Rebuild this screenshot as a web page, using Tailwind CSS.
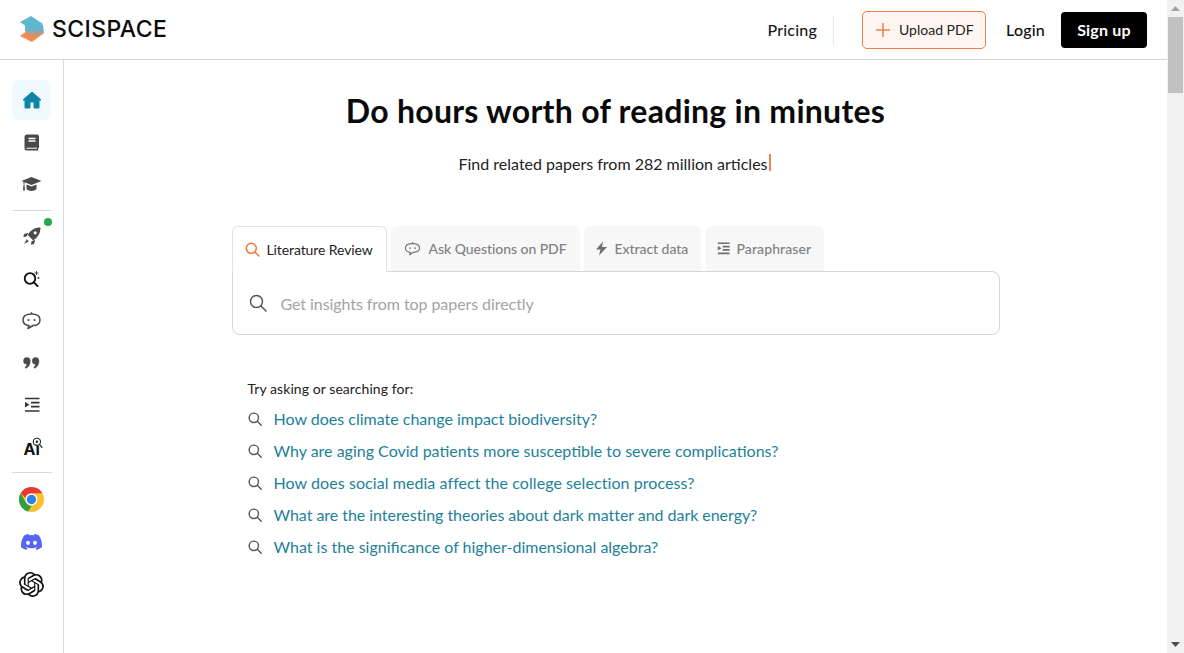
<!DOCTYPE html>
<html><head><meta charset="utf-8">
<script src="https://cdn.jsdelivr.net/npm/@tailwindcss/browser@4"></script>
</head>
<body class="font-['Lato','Liberation_Sans',sans-serif] bg-white overflow-hidden">
<div class="flex w-[1184px] h-[653px]">
  <div class="w-[1167px] flex flex-col">
    <header class="h-[60px] shrink-0 border-b border-[#d6d6d6] flex items-center pl-[19px] pr-[20px]">
      <svg width="26" height="26" viewBox="0 0 26 26" class="-mt-[1px]">
        <defs><linearGradient id="lg" x1="0" y1="0" x2="0" y2="1"><stop offset="0.3" stop-color="#62b5cb"/><stop offset="0.85" stop-color="#f48a4e"/></linearGradient></defs>
        <path d="M1 20 L8 15 L25 17 L13 26 Z" fill="#f48a4e"/>
        <path d="M6 9 L24 9 L25 17 L13 23 L6 15 Z" fill="url(#lg)"/>
        <path d="M1 6 L12 0 L24 8 L14 15 Z" fill="#5fb6cf"/>
      </svg>
      <span class="ml-[7px] text-[23px] leading-none font-medium tracking-[0.4px] text-[#0b0b0b] font-['Inter',sans-serif]">SCISPACE</span>
      <div class="ml-auto flex items-center">
        <span class="text-[16px] font-medium text-[#1a1a1a] tracking-[0.2px]">Pricing</span>
        <div class="w-px h-[28px] bg-[#e8e8e8] mx-[16px]"></div>
        <button class="ml-[12px] w-[124px] h-[38px] border border-[#ef7f4a] rounded-[5px] bg-[#fff6f2] flex items-center pl-[12px]">
          <svg width="16" height="16" viewBox="0 0 16 16"><path d="M8 1v14M1 8h14" stroke="#f0844f" stroke-width="1.6" fill="none"/></svg>
          <span class="ml-[8px] text-[14px] text-[#222]">Upload PDF</span>
        </button>
        <span class="ml-[20px] text-[16px] font-medium text-[#111] tracking-[0.2px]">Login</span>
        <button class="ml-[16px] w-[86px] h-[36px] bg-black rounded-[4px] text-white text-[16px] font-bold tracking-[0.2px]">Sign up</button>
      </div>
    </header>
    <div class="flex flex-1 min-h-0">
      <aside class="w-[64px] shrink-0 border-r border-[#d9d9d9] flex flex-col items-center pt-[20px]">
        <div class="w-[39px] h-[40px] rounded-[6px] bg-[#f0f9fd] flex items-center justify-center">
          <svg width="20" height="18" viewBox="0 0 20 18"><path d="M10 1 L19 9 L17 9 L17 17 L12 17 L12 11 L8 11 L8 17 L3 17 L3 9 L1 9 Z" fill="#0b87a5" stroke="#0b87a5" stroke-linejoin="round"/></svg>
        </div>
        <div class="h-[42px] mt-[1px] flex items-center justify-center">
          <svg width="16" height="17" viewBox="0 0 16 17"><path d="M3 0.5h10a2 2 0 0 1 2 2v11a1 1 0 0 1-1 1 v1.5h0.5v0.5H3a2.5 2.5 0 0 1-2.500-2.500V3a2.500 2.500 0 0 1 2.500-2.500z" fill="#4a4a4a"/><path d="M4.500 4.500h7M4.500 7h7" stroke="#fff" stroke-width="1.300"/><path d="M2.500 14.200h10.500" stroke="#fff" stroke-width="1"/></svg>
        </div>
        <div class="h-[42px] flex items-center justify-center">
          <svg width="21" height="17" viewBox="0 0 21 17"><path d="M10.500 1 L20.500 5 L10.500 9 L3.500 6.200 L3.500 8 L2.500 8 L2.500 5.800 L0.500 5 Z" fill="#4a4a4a"/><path d="M5.500 8.500 L10.500 10.500 L15.500 8.500 L15.500 13 C13.500 15.500 7.500 15.500 5.500 13 Z" fill="#4a4a4a"/><path d="M2.500 8.500h1l0.500 6h-2z" fill="#4a4a4a"/></svg>
        </div>
        <div class="w-[40px] h-px bg-[#d9d9d9] mt-[5px]"></div>
        <div class="relative w-[40px] h-[42px] mt-[4px] flex items-center justify-center">
          <svg width="18" height="18" viewBox="0 0 17 17"><path d="M16.500 0.500 C11 0.500 7 3 4.500 7.500 L9.500 12.500 C14 10 16.500 6 16.500 0.500 Z" fill="#4a4a4a"/><path d="M5 5.500 L1 6.500 L0.300 9.500 L3.500 9 Z M11.500 12 L10.500 16 L7.500 16.700 L8 13.500 Z" fill="#4a4a4a"/><circle cx="11.500" cy="5.500" r="1.500" fill="#fff"/><path d="M3.500 11.500 L1 16 L5.500 13.500 Z" fill="#4a4a4a"/></svg>
          <span class="absolute top-[3px] right-[0px] w-[8px] h-[8px] rounded-full bg-[#22a94f]"></span>
        </div>
        <div class="h-[42px] flex items-center justify-center">
          <svg width="17" height="17" viewBox="0 0 17 17"><circle cx="7" cy="8.500" r="5.300" fill="none" stroke="#111" stroke-width="1.800"/><path d="M10.800 12.300 L14.500 16" stroke="#111" stroke-width="1.900" stroke-linecap="round"/><path d="M13.500 1v4M11.500 3h4M15.500 7v2M14.500 8h2" stroke="#333" stroke-width="0.900"/></svg>
        </div>
        <div class="h-[42px] flex items-center justify-center">
          <svg width="19" height="19" viewBox="0 0 19 19"><path d="M9.500 3 C4 3 1 5.500 1 9 C1 12.500 4 14.500 7 14.500 L6 17.500 L11 14.500 C15 14.500 18 12.500 18 9 C18 5.500 15 3 9.500 3 Z" fill="none" stroke="#4a4a4a" stroke-width="1.500" stroke-linejoin="round"/><path d="M9.500 3V1.200" stroke="#4a4a4a" stroke-width="1.500"/><circle cx="6.500" cy="9" r="1.100" fill="#4a4a4a"/><circle cx="12.500" cy="9" r="1.100" fill="#4a4a4a"/></svg>
        </div>
        <div class="h-[42px] mt-[1px] flex items-center justify-center">
          <svg width="17" height="12" viewBox="0 0 16 11"><path d="M0.500 3.500a3.100 3.100 0 0 1 6.300 0c0 3.200-1.500 6-4.200 7l-0.600-1c1-0.800 1.500-1.800 1.600-2.900a3.100 3.100 0 0 1-3.100-3.100z M8.700 3.500a3.100 3.100 0 0 1 6.300 0c0 3.200-1.500 6-4.200 7l-0.600-1c1-0.800 1.500-1.800 1.600-2.900a3.100 3.100 0 0 1-3.100-3.100z" fill="#4a4a4a" stroke="#4a4a4a" stroke-width="0.500"/></svg>
        </div>
        <div class="h-[42px] flex items-center justify-center">
          <svg width="16" height="16" viewBox="0 0 16 15"><path d="M1 1h14.500M7 5.200h8.500M7 9.200h8.500M1 13.500h14.500" stroke="#333" stroke-width="1.700"/><path d="M1 4.500 L5.500 7.200 L1 10 Z" fill="#333"/></svg>
        </div>
        <div class="h-[42px] w-[16px] flex items-center relative">
          <span class="text-[16px] font-bold leading-none text-[#111] mt-[4px] font-['Inter',sans-serif]">Ai</span>
          <svg width="11" height="12" viewBox="0 0 9 10" class="absolute top-[11px] left-[8px]"><circle cx="4" cy="4" r="3" fill="#fff" stroke="#222" stroke-width="0.900"/><circle cx="4" cy="4" r="1" fill="#222"/><path d="M6.200 6.200 L8.500 9" stroke="#222" stroke-width="1"/></svg>
        </div>
        <div class="w-[40px] h-px bg-[#d9d9d9] mt-[4px]"></div>
        <div class="h-[42px] mt-[5px] flex items-center justify-center">
          <svg width="25" height="25" viewBox="0 0 48 48"><circle cx="24" cy="24" r="24" fill="#fbc02d"/><path d="M24 0a24 24 0 0 1 20.800 12H24a12 12 0 0 0-11.500 8.500L3.200 12A24 24 0 0 1 24 0z" fill="#e53935"/><path d="M3.200 12 L13.600 30 A12 12 0 0 0 24 36 L17.700 47.200 A24 24 0 0 1 3.200 12z" fill="#2e9e49"/><circle cx="24" cy="24" r="11.500" fill="#fff"/><circle cx="24" cy="24" r="9" fill="#2c80e8"/></svg>
        </div>
        <div class="h-[42px] mt-[1px] flex items-center justify-center">
          <svg width="21" height="16" viewBox="0 0 127.140 96.360"><path fill="#5865f2" d="M107.700 8.070A105.150 105.150 0 0 0 81.470 0a72.060 72.060 0 0 0-3.360 6.830 97.680 97.680 0 0 0-29.110 0A72.370 72.370 0 0 0 45.640 0a105.890 105.890 0 0 0-26.250 8.090C2.790 32.650-1.710 56.600.54 80.210a105.730 105.730 0 0 0 32.170 16.150 77.700 77.700 0 0 0 6.890-11.110 68.420 68.420 0 0 1-10.850-5.180c.91-.66 1.800-1.340 2.660-2a75.570 75.570 0 0 0 64.320 0c.87.710 1.760 1.390 2.660 2a68.680 68.680 0 0 1-10.870 5.190 77 77 0 0 0 6.890 11.100 105.250 105.250 0 0 0 32.190-16.140c2.640-27.380-4.510-51.110-18.900-72.150zM42.450 65.690C36.180 65.690 31 60 31 53s5-12.740 11.430-12.740S54 46 53.890 53s-5.050 12.690-11.440 12.690zm42.240 0C78.410 65.690 73.250 60 73.250 53s5-12.740 11.440-12.740S96.230 46 96.120 53s-5.040 12.690-11.430 12.690z"/></svg>
        </div>
        <div class="h-[42px] flex items-center justify-center">
          <svg width="25" height="25" viewBox="0 0 24 24"><path fill="#111" d="M22.282 9.821a5.985 5.985 0 0 0-.516-4.910 6.046 6.046 0 0 0-6.510-2.900A6.065 6.065 0 0 0 4.981 4.182a5.985 5.985 0 0 0-3.998 2.900 6.046 6.046 0 0 0 .743 7.097 5.980 5.980 0 0 0 .511 4.911 6.051 6.051 0 0 0 6.515 2.900A5.985 5.985 0 0 0 13.260 24a6.056 6.056 0 0 0 5.772-4.206 5.990 5.990 0 0 0 3.997-2.900 6.056 6.056 0 0 0-.747-7.073zM13.260 22.430a4.476 4.476 0 0 1-2.876-1.040l.141-.081 4.779-2.758a.795.795 0 0 0 .392-.681v-6.737l2.020 1.168a.071.071 0 0 1 .038.052v5.583a4.504 4.504 0 0 1-4.494 4.494zM3.600 18.304a4.470 4.470 0 0 1-.535-3.014l.142.085 4.783 2.759a.771.771 0 0 0 .781 0l5.843-3.369v2.332a.080.080 0 0 1-.033.062L9.740 19.950a4.500 4.500 0 0 1-6.140-1.646zM2.340 7.896a4.485 4.485 0 0 1 2.366-1.973V11.600a.766.766 0 0 0 .388.676l5.815 3.355-2.020 1.168a.076.076 0 0 1-.071 0l-4.830-2.786A4.504 4.504 0 0 1 2.340 7.872zm16.597 3.855l-5.833-3.387L15.119 7.200a.076.076 0 0 1 .071 0l4.830 2.791a4.494 4.494 0 0 1-.676 8.105v-5.678a.790.790 0 0 0-.407-.667zm2.010-3.023l-.141-.085-4.774-2.782a.776.776 0 0 0-.785 0L9.409 9.230V6.897a.066.066 0 0 1 .028-.061l4.830-2.787a4.500 4.500 0 0 1 6.680 4.660zm-12.640 4.135l-2.020-1.164a.080.080 0 0 1-.038-.057V6.075a4.500 4.500 0 0 1 7.375-3.453l-.142.080L8.704 5.460a.795.795 0 0 0-.393.681zm1.097-2.365l2.602-1.500 2.607 1.500v2.999l-2.597 1.500-2.607-1.500z"/></svg>
        </div>
      </aside>
      <main class="flex-1 min-w-0 flex flex-col items-center">
        <h1 class="mt-[31px] text-[32px] leading-[40px] font-bold text-[#0a0a0a] tracking-[0.27px]">Do hours worth of reading in minutes</h1>
        <p class="mt-[21px] -ml-[2px] text-[16px] leading-[24px] text-[#222] flex items-center">Find related papers from 282 million articles<span class="inline-block w-[2px] h-[17px] bg-[#f0844f] ml-[1px] mb-[3px]"></span></p>
        <div class="mt-[49px] w-[768px]">
          <div class="flex h-[46px] items-end">
            <div class="w-[155px] h-[46px] -mb-px relative z-10 bg-white border border-[#e2e2e2] border-b-white rounded-t-[6px] flex items-center pl-[12px]">
              <svg width="15" height="15" viewBox="0 0 15 15"><circle cx="6.300" cy="6.300" r="5" fill="none" stroke="#ee7a45" stroke-width="1.600"/><path d="M10 10 L14 14" stroke="#ee7a45" stroke-width="1.600" stroke-linecap="round"/></svg>
              <span class="ml-[7px] text-[14px] text-[#222] tracking-[-0.1px]">Literature Review</span>
            </div>
            <div class="ml-[4px] w-[189px] h-[45px] bg-[#f7f7f8] rounded-t-[6px] flex items-center pl-[13px]">
              <svg width="17" height="15" viewBox="0 0 19 18"><path d="M9.500 3 C4.500 3 1 5 1 8.500 C1 12 4.500 13.500 7 13.500 L6 16.500 L10.500 13.500 C15 13.500 18 12 18 8.500 C18 5 14.500 3 9.500 3 Z" fill="none" stroke="#7a7a7a" stroke-width="1.500" stroke-linejoin="round"/><path d="M9.500 3V1.200" stroke="#7a7a7a" stroke-width="1.500"/><circle cx="6.500" cy="8.500" r="1.100" fill="#7a7a7a"/><circle cx="12.500" cy="8.500" r="1.100" fill="#7a7a7a"/></svg>
              <span class="ml-[8px] text-[14px] font-medium text-[#808080] tracking-[-0.05px]">Ask Questions on PDF</span>
            </div>
            <div class="ml-[4px] w-[117px] h-[45px] bg-[#f7f7f8] rounded-t-[6px] flex items-center pl-[11px]">
              <svg width="13" height="15" viewBox="0 0 13 15"><path d="M8 0.500 L1 8.500 L5.500 8.500 L4 14.500 L12 6 L7 6 Z" fill="#6f6f6f"/></svg>
              <span class="ml-[7px] text-[14px] font-medium text-[#808080] tracking-[-0.05px]">Extract data</span>
            </div>
            <div class="ml-[5px] w-[118px] h-[45px] bg-[#f7f7f8] rounded-t-[6px] flex items-center pl-[11px]">
              <svg width="13" height="13" viewBox="0 0 16 15"><path d="M1 1h14.500M7 5.200h8.500M7 9.200h8.500M1 13.500h14.500" stroke="#6f6f6f" stroke-width="1.900"/><path d="M1 4.500 L5.500 7.200 L1 10 Z" fill="#6f6f6f"/></svg>
              <span class="ml-[7px] text-[14px] font-medium text-[#808080] tracking-[0.1px]">Paraphraser</span>
            </div>
          </div>
          <div class="h-[64px] border border-[#d6d6d6] rounded-b-[8px] rounded-tr-[8px] flex items-center pl-[16px]">
            <svg width="18" height="18" viewBox="0 0 18 18"><circle cx="7.500" cy="7.500" r="6" fill="none" stroke="#555" stroke-width="1.500"/><path d="M12 12 L17 17" stroke="#555" stroke-width="1.500" stroke-linecap="round"/></svg>
            <span class="ml-[14px] mt-[2px] text-[16px] text-[#a3a3a3] tracking-[-0.07px]">Get insights from top papers directly</span>
          </div>
          <div class="pl-[16px] mt-[44px]">
            <p class="text-[14px] leading-[20px] text-[#222] tracking-[0.07px]">Try asking or searching for:</p>
            <ul class="mt-[4px] flex flex-col">
              <li class="h-[32px] flex items-center"><svg width="14" height="14" viewBox="0 0 18 18"><circle cx="7.500" cy="7.500" r="6" fill="none" stroke="#555" stroke-width="1.800"/><path d="M12 12 L17 17" stroke="#555" stroke-width="1.800" stroke-linecap="round"/></svg><span class="ml-[12px] text-[16px] text-[#1d8199]">How does climate change impact biodiversity?</span></li>
              <li class="h-[32px] flex items-center"><svg width="14" height="14" viewBox="0 0 18 18"><circle cx="7.500" cy="7.500" r="6" fill="none" stroke="#555" stroke-width="1.800"/><path d="M12 12 L17 17" stroke="#555" stroke-width="1.800" stroke-linecap="round"/></svg><span class="ml-[12px] text-[16px] text-[#1d8199]">Why are aging Covid patients more susceptible to severe complications?</span></li>
              <li class="h-[32px] flex items-center"><svg width="14" height="14" viewBox="0 0 18 18"><circle cx="7.500" cy="7.500" r="6" fill="none" stroke="#555" stroke-width="1.800"/><path d="M12 12 L17 17" stroke="#555" stroke-width="1.800" stroke-linecap="round"/></svg><span class="ml-[12px] text-[16px] text-[#1d8199] tracking-[0.07px]">How does social media affect the college selection process?</span></li>
              <li class="h-[32px] flex items-center"><svg width="14" height="14" viewBox="0 0 18 18"><circle cx="7.500" cy="7.500" r="6" fill="none" stroke="#555" stroke-width="1.800"/><path d="M12 12 L17 17" stroke="#555" stroke-width="1.800" stroke-linecap="round"/></svg><span class="ml-[12px] text-[16px] text-[#1d8199] tracking-[-0.04px]">What are the interesting theories about dark matter and dark energy?</span></li>
              <li class="h-[32px] flex items-center"><svg width="14" height="14" viewBox="0 0 18 18"><circle cx="7.500" cy="7.500" r="6" fill="none" stroke="#555" stroke-width="1.800"/><path d="M12 12 L17 17" stroke="#555" stroke-width="1.800" stroke-linecap="round"/></svg><span class="ml-[12px] text-[16px] text-[#1d8199]">What is the significance of higher-dimensional algebra?</span></li>
            </ul>
          </div>
        </div>
      </main>
    </div>
  </div>
  <div class="w-[17px] bg-[#f1f1f1] flex flex-col items-center">
    <div class="h-[17px] flex items-center justify-center"><svg width="9" height="5" viewBox="0 0 9 5"><path d="M4.500 0L9 5H0z" fill="#a3a3a3"/></svg></div>
    <div class="w-[15px] h-[76px] bg-[#c1c1c1]"></div>
    <div class="flex-1"></div>
    <div class="h-[17px] flex items-center justify-center"><svg width="9" height="5" viewBox="0 0 9 5"><path d="M0 0H9L4.500 5z" fill="#505050"/></svg></div>
  </div>
</div>
</body></html>
